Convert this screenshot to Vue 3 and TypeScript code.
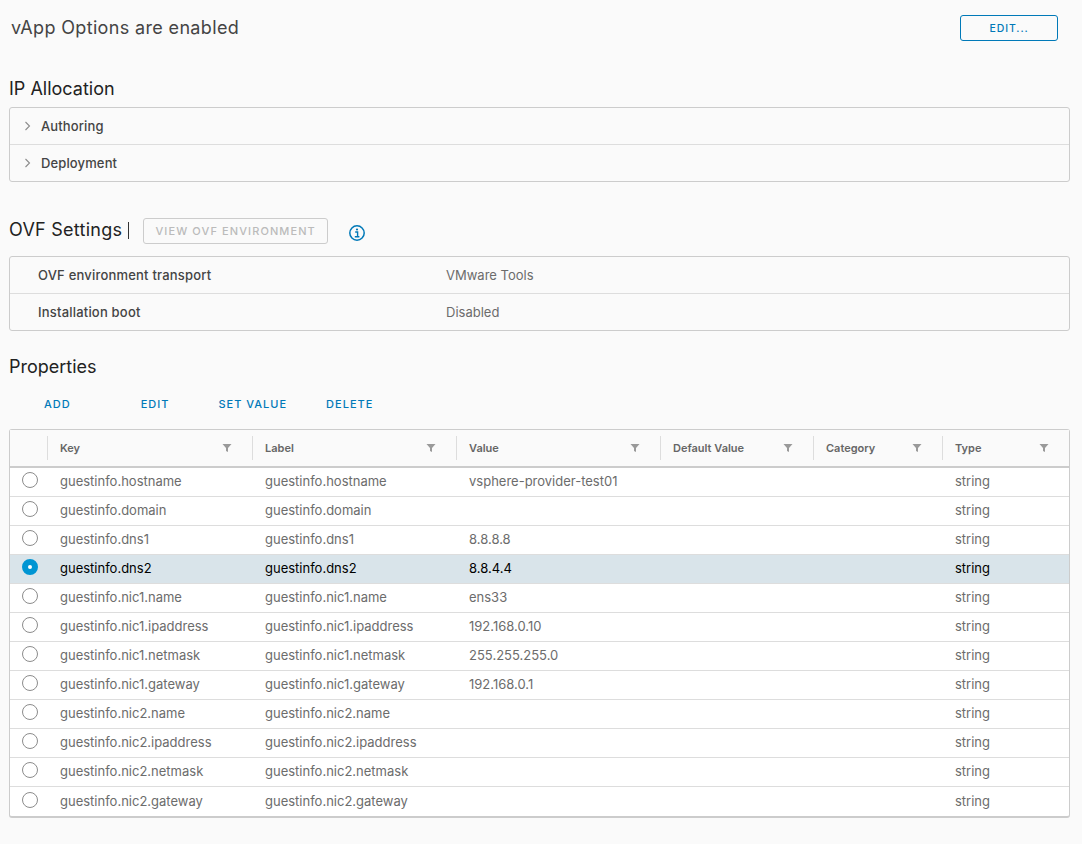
<script setup lang="ts">
interface Row { key: string; value: string; selected?: boolean }
const columns = [
  { name: 'Key', width: 205 },
  { name: 'Label', width: 204 },
  { name: 'Value', width: 204 },
  { name: 'Default Value', width: 153 },
  { name: 'Category', width: 129 },
  { name: 'Type', width: 127 },
]
const rows: Row[] = [
  { key: 'guestinfo.hostname', value: 'vsphere-provider-test01' },
  { key: 'guestinfo.domain', value: '' },
  { key: 'guestinfo.dns1', value: '8.8.8.8' },
  { key: 'guestinfo.dns2', value: '8.8.4.4', selected: true },
  { key: 'guestinfo.nic1.name', value: 'ens33' },
  { key: 'guestinfo.nic1.ipaddress', value: '192.168.0.10' },
  { key: 'guestinfo.nic1.netmask', value: '255.255.255.0' },
  { key: 'guestinfo.nic1.gateway', value: '192.168.0.1' },
  { key: 'guestinfo.nic2.name', value: '' },
  { key: 'guestinfo.nic2.ipaddress', value: '' },
  { key: 'guestinfo.nic2.netmask', value: '' },
  { key: 'guestinfo.nic2.gateway', value: '' },
]
</script>

<template>
  <div class="page">
    <div class="top">
      <div class="top-title">vApp Options are enabled</div>
      <button class="edit-btn">EDIT...</button>
    </div>

    <h2 class="h ip">IP Allocation</h2>
    <div class="panel">
      <div class="acc-row">
        <svg class="chev" width="8" height="10" viewBox="0 0 8 10"><path d="M1.5 1 L5.5 5 L1.5 9" fill="none" stroke="#8c8c8c" stroke-width="1.1" /></svg>
        <span>Authoring</span>
      </div>
      <div class="acc-row">
        <svg class="chev" width="8" height="10" viewBox="0 0 8 10"><path d="M1.5 1 L5.5 5 L1.5 9" fill="none" stroke="#8c8c8c" stroke-width="1.1" /></svg>
        <span>Deployment</span>
      </div>
    </div>

    <div class="ovf-head">
      <h2 class="h ovf-title">OVF Settings</h2>
      <span class="bar"></span>
      <button class="ovf-btn">VIEW OVF ENVIRONMENT</button>
      <svg class="info" width="16" height="16" viewBox="0 0 16 16">
        <circle cx="8" cy="8" r="7.2" fill="none" stroke="#0079b8" stroke-width="1.5" />
        <circle cx="8" cy="4.5" r="1.1" fill="#0079b8" />
        <path d="M6.2 7 H8.6 V11.4 M5.8 11.7 H10.4" fill="none" stroke="#0079b8" stroke-width="1.4" />
      </svg>
    </div>
    <div class="panel">
      <div class="kv-row"><span class="k">OVF environment transport</span><span class="v">VMware Tools</span></div>
      <div class="kv-row"><span class="k">Installation boot</span><span class="v">Disabled</span></div>
    </div>

    <h2 class="h props">Properties</h2>
    <div class="actions">
      <span class="act a1">ADD</span>
      <span class="act a2">EDIT</span>
      <span class="act a3">SET VALUE</span>
      <span class="act a4">DELETE</span>
    </div>

    <div class="grid">
      <div class="thead">
        <div class="cell-radio"></div>
        <div v-for="c in columns" :key="c.name" class="th" :style="{ width: c.width + 'px' }">
          <span>{{ c.name }}</span>
          <svg class="filter" width="10" height="10" viewBox="0 0 10 10"><path d="M0.5 1 H9.5 L6 5 V9 L4 8 V5 Z" fill="#9a9a9a" /></svg>
        </div>
      </div>
      <div v-for="r in rows" :key="r.key" class="tr" :class="{ sel: r.selected }">
        <div class="cell-radio">
          <span class="radio" :class="{ on: r.selected }"></span>
        </div>
        <div class="td" :style="{ width: columns[0].width + 'px' }">{{ r.key }}</div>
        <div class="td" :style="{ width: columns[1].width + 'px' }">{{ r.key }}</div>
        <div class="td" :style="{ width: columns[2].width + 'px' }">{{ r.value }}</div>
        <div class="td" :style="{ width: columns[3].width + 'px' }"></div>
        <div class="td" :style="{ width: columns[4].width + 'px' }"></div>
        <div class="td" :style="{ width: columns[5].width + 'px' }">string</div>
      </div>
    </div>
  </div>
</template>

<style>
html, body { margin: 0; background: #fafafa; }
</style>

<style scoped>
.page {
  box-sizing: border-box;
  width: 1082px;
  height: 844px;
  padding: 0 12px 0 9px;
  background: #fafafa;
  font-family: Inter, "Open Sans", sans-serif;
  color: #565656;
  overflow: hidden;
}
.top {
  display: flex;
  justify-content: space-between;
  align-items: center;
  height: 56px;
  padding: 0 12px 0 2px;
}
.top-title { font-size: 18px; letter-spacing: 0.35px; color: #444; margin-top: -1px; }
.edit-btn {
  width: 98px;
  height: 26px;
  box-sizing: border-box;
  border: 1px solid #0079b8;
  border-radius: 3px;
  background: transparent;
  color: #0079b8;
  font: 500 10.5px Inter, sans-serif;
  letter-spacing: 0.9px;
  padding: 0;
}
.h {
  margin: 0;
  font-size: 18px;
  line-height: 24px;
  font-weight: 400;
  color: #222;
}
.ip { margin-top: 21px; margin-bottom: 6px; }
.panel {
  border: 1px solid #ccc;
  border-radius: 3px;
  background: #fafafa;
}
.acc-row {
  display: flex;
  align-items: center;
  height: 36px;
  padding-left: 14px;
  font-size: 13px;
  font-weight: 500;
  letter-spacing: 0.13px;
  color: #444;
}
.acc-row + .acc-row, .kv-row + .kv-row { border-top: 1px solid #ddd; }
.chev { margin-right: 9px; }
.ovf-head {
  display: flex;
  align-items: center;
  height: 26px;
  margin-top: 36px;
  margin-bottom: 12px;
}
.ovf-title { letter-spacing: 0.25px; position: relative; top: -1px; }
.bar { width: 1px; height: 17px; background: #333; margin-left: 6px; position: relative; top: -1px; }
.ovf-btn {
  width: 185px;
  height: 26px;
  box-sizing: border-box;
  margin-left: 14px;
  border: 1px solid #ccc;
  border-radius: 3px;
  background: transparent;
  color: #bbb;
  font: 500 11px Inter, sans-serif;
  letter-spacing: 1.1px;
  padding: 0;
}
.info { margin-left: 21px; margin-top: 3px; }
.kv-row {
  display: flex;
  align-items: center;
  height: 36px;
  padding-left: 28px;
  font-size: 13px;
}
.k { width: 408px; font-weight: 500; letter-spacing: 0.2px; color: #444; }
.v { color: #6c6c6c; }
.props { margin-top: 24px; }
.actions {
  height: 26px;
  margin-top: 12px;
  margin-bottom: 12px;
  display: flex;
  align-items: center;
}
.act {
  color: #0079b8;
  font-size: 11px;
  font-weight: 500;
  letter-spacing: 1px;
}
.a1 { margin-left: 35px; }
.a2 { margin-left: 70px; }
.a3 { margin-left: 49px; }
.a4 { margin-left: 39px; }
.grid {
  width: 1061px;
  border: 1px solid #ccc;
  border-bottom: 2px solid #ccc;
  border-radius: 3px;
  background: #fff;
  box-sizing: border-box;
}
.thead {
  display: flex;
  background: #fafafa;
  border-bottom: 2px solid #ccc;
  box-sizing: border-box;
  height: 38px;
  align-items: center;
}
.cell-radio {
  width: 37px;
  flex: none;
  display: flex;
  align-items: center;
  justify-content: center;
  padding-left: 3px;
  box-sizing: border-box;
}
.th {
  flex: none;
  box-sizing: border-box;
  height: 24px;
  display: flex;
  align-items: center;
  justify-content: space-between;
  padding: 0 20px 0 12px;
  border-left: 1px solid #ddd;
  font-size: 11px;
  font-weight: 600;
  color: #666;
}
.tr {
  display: flex;
  height: 29px;
  box-sizing: border-box;
  border-bottom: 1px solid #ddd;
  align-items: center;
  font-size: 13px;
  color: #6c6c6c;
}
.tr:last-child { border-bottom: none; }
.tr.sel { background: #d9e4ea; color: #000; }
.td { flex: none; box-sizing: border-box; padding-left: 13px; padding-bottom: 2px; white-space: nowrap; }
.radio {
  display: block;
  box-sizing: border-box;
  width: 16px;
  height: 16px;
  border: 1px solid #8c8c8c;
  border-radius: 50%;
  background: #fff;
  margin-top: -4px;
}
.radio.on {
  border: 6px solid #0095d3;
  background: #fff;
}
</style>
